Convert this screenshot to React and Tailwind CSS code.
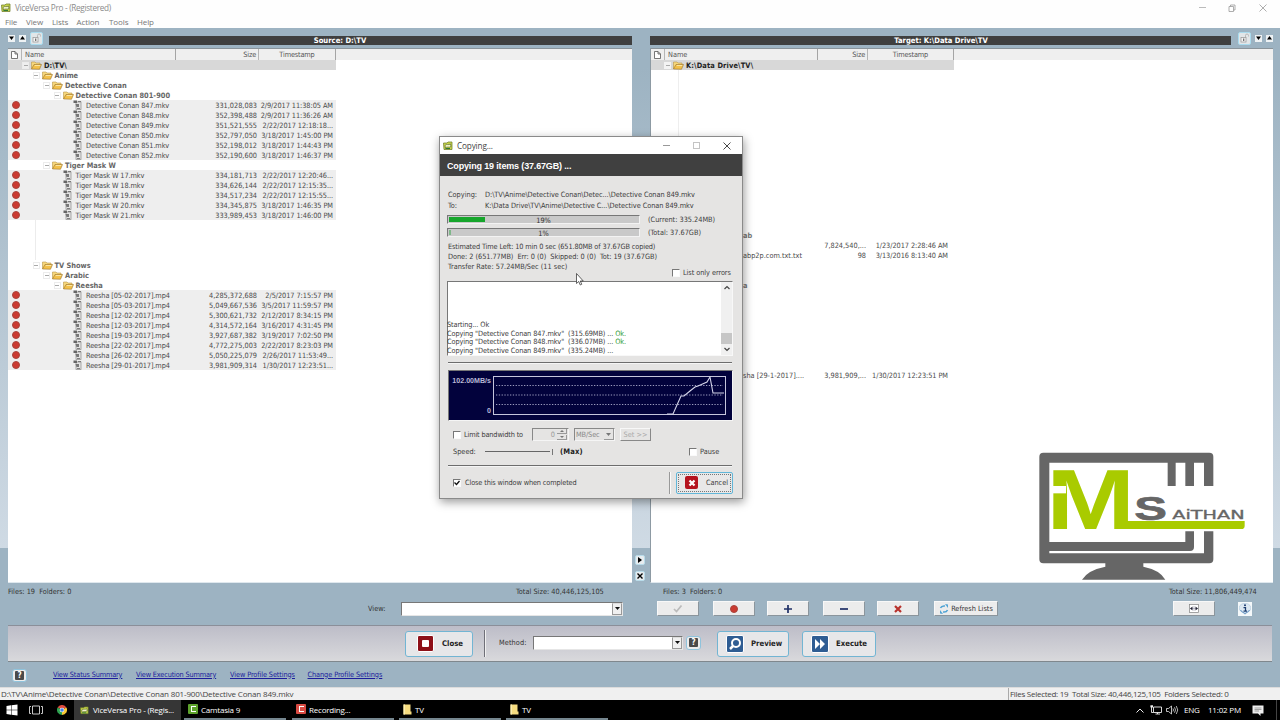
const sourceRows = [
  { level: 0, name: "D:\\TV\\", root: true },
  { level: 1, name: "Anime" },
  { level: 2, name: "Detective Conan" },
  { level: 3, name: "Detective Conan 801-900" },
  { level: 4, name: "Detective Conan 847.mkv", size: "331,028,083", time: "2/9/2017 11:38:05 AM" },
  { level: 4, name: "Detective Conan 848.mkv", size: "352,398,488", time: "2/9/2017 11:36:26 AM" },
  { level: 4, name: "Detective Conan 849.mkv", size: "351,521,555", time: "2/22/2017 12:18:18..." },
  { level: 4, name: "Detective Conan 850.mkv", size: "352,797,050", time: "3/18/2017 1:45:00 PM" },
  { level: 4, name: "Detective Conan 851.mkv", size: "352,198,012", time: "3/18/2017 1:44:43 PM" },
  { level: 4, name: "Detective Conan 852.mkv", size: "352,190,600", time: "3/18/2017 1:46:37 PM" },
  { level: 2, name: "Tiger Mask W" },
  { level: 3, name: "Tiger Mask W 17.mkv", size: "334,181,713", time: "2/22/2017 12:20:46..." },
  { level: 3, name: "Tiger Mask W 18.mkv", size: "334,626,144", time: "2/22/2017 12:15:35..." },
  { level: 3, name: "Tiger Mask W 19.mkv", size: "334,517,234", time: "2/22/2017 12:15:55..." },
  { level: 3, name: "Tiger Mask W 20.mkv", size: "334,345,875", time: "3/18/2017 1:46:35 PM" },
  { level: 3, name: "Tiger Mask W 21.mkv", size: "333,989,453", time: "3/18/2017 1:46:00 PM" },
  null,
  null,
  null,
  null,
  { level: 1, name: "TV Shows" },
  { level: 2, name: "Arabic" },
  { level: 3, name: "Reesha" },
  { level: 4, name: "Reesha [05-02-2017].mp4", size: "4,285,372,688", time: "2/5/2017 7:15:57 PM" },
  { level: 4, name: "Reesha [05-03-2017].mp4", size: "5,049,667,536", time: "3/5/2017 11:59:57 PM" },
  { level: 4, name: "Reesha [12-02-2017].mp4", size: "5,300,621,732", time: "2/12/2017 8:34:15 PM" },
  { level: 4, name: "Reesha [12-03-2017].mp4", size: "4,314,572,164", time: "3/16/2017 4:31:45 PM" },
  { level: 4, name: "Reesha [19-03-2017].mp4", size: "3,927,687,382", time: "3/19/2017 7:02:50 PM" },
  { level: 4, name: "Reesha [22-02-2017].mp4", size: "4,772,275,003", time: "2/22/2017 8:23:03 PM" },
  { level: 4, name: "Reesha [26-02-2017].mp4", size: "5,050,225,079", time: "2/26/2017 11:53:49..." },
  { level: 4, name: "Reesha [29-01-2017].mp4", size: "3,981,909,314", time: "1/30/2017 12:23:51..." },
];

// skip is the number of empty rows in front of the entry
const targetRows = [
  { skip: 16, name: "ab", bold: true },
  { skip: 0, name: "", size: "7,824,540,...", time: "1/23/2017 2:28:46 AM" },
  { skip: 0, name: "abp2p.com.txt.txt", size: "98", time: "3/13/2016 8:13:40 AM" },
  { skip: 2, name: "a", bold: true },
  { skip: 8, name: "sha [29-1-2017]....", size: "3,981,909,...", time: "1/30/2017 12:23:51 PM" },
];

const indents = ["w-[14px]", "w-[24.5px]", "w-[35px]", "w-[45.5px]", "w-[56px]"];

function AppIcon({ className = "w-[10px] h-[10px]" }) {
  return (
    <svg className={className} viewBox="0 0 20 20">
      <path d="M1 4h7l2-2h8v15H2z" fill="#c9d64a" stroke="#6f7d2a" strokeWidth="1.5" />
      <path d="M4 9c3-4 7 0 11-3l1 5c-4 3-8-1-11 3z" fill="#f4f6cf" stroke="#47551c" strokeWidth="1.2" />
      <path d="M5 15h9" stroke="#2f7a35" strokeWidth="2" />
    </svg>
  );
}

function FolderIcon() {
  return (
    <svg className="w-[11px] h-[9px] shrink-0" viewBox="0 0 22 18">
      <path d="M1 16V2h7l2 2h8v4" fill="#f6d77c" stroke="#b8954a" strokeWidth="1.2" />
      <path d="M1 16L6 7h15l-4 9.5z" fill="#f3c04a" stroke="#9a7630" strokeWidth="1.2" />
      <path d="M7.5 9h11" stroke="#fde9a8" strokeWidth="1.8" />
    </svg>
  );
}

function FileIcon() {
  return (
    <svg className="w-[9px] h-[10px] shrink-0" viewBox="0 0 18 20">
      <rect x="6" y="4" width="10" height="15" fill="#e2e2e2" stroke="#8a8a8a" strokeWidth="1.4" />
      <rect x="1" y="1" width="7" height="5" fill="#666" />
      <path d="M5 8h7v6H7z" fill="#777" />
      <path d="M10 3h6M8 17h6" stroke="#666" strokeWidth="1.6" />
    </svg>
  );
}

function DocIcon() {
  return (
    <svg className="w-[7px] h-[8px] shrink-0" viewBox="0 0 14 16">
      <path d="M1 1h7l5 5v9H1zM8 1v5h5" fill="#fff" stroke="#555" strokeWidth="1.6" />
    </svg>
  );
}

function HelpIcon({ className }) {
  return (
    <div className={`flex items-center justify-center rounded-[3px] border border-[#8fc3dc] bg-[#ececec] ${className}`}>
      <span className="flex h-[9px] w-[9px] items-center justify-center rounded-[1px] bg-[#4a4a4a] text-[8px] font-bold leading-none text-white">
        ?
      </span>
    </div>
  );
}

function ArrowBox({ up }) {
  return (
    <div className="flex h-[7px] w-[7px] items-center justify-center bg-[#eef2f4]">
      <svg className="h-[4px] w-[5px]" viewBox="0 0 10 8">
        <path d={up ? "M5 0l5 7H0z" : "M0 1h10L5 8z"} fill="#000" />
      </svg>
    </div>
  );
}

function LockBox() {
  return (
    <div className="flex h-[13px] w-[13px] items-center justify-center rounded-[2px] border border-[#a9dbee] bg-[#e2e6e8]">
      <svg className="h-[10px] w-[10px]" viewBox="0 0 20 20">
        <rect x="2" y="9" width="10" height="9" fill="#f6f6f6" stroke="#999" strokeWidth="1.5" />
        <path d="M11 9V5q0-3 3-3t3 3v2" fill="none" stroke="#aaa" strokeWidth="1.5" />
        <path d="M7.500 11v5" stroke="#444" strokeWidth="2" />
      </svg>
    </div>
  );
}

function ListHeader({ nameWidth, sizeWidth, timeWidth }) {
  return (
    <div className="flex h-[12px] shrink-0 items-stretch border-t border-[#8b949a] bg-[#efefef] text-[7.3px] leading-[12px] text-[#555]">
      <div className="flex w-[14px] items-center border-r border-[#b5b5b5] pl-[3px]">
        <DocIcon />
      </div>
      <div className={`border-r border-[#a5a5a5] pl-[3px] ${nameWidth}`}>Name</div>
      <div className={`border-r border-[#b5b5b5] pr-[2px] text-right tracking-[-0.2px] ${sizeWidth}`}>Size</div>
      <div className={`border-r border-[#a5a5a5] text-center tracking-[-0.15px] ${timeWidth}`}>Timestamp</div>
    </div>
  );
}

function TreeRow({ row }) {
  if (!row) {
    return (
      <div className="flex h-[10px]">
        <div className="w-[28px] border-r border-[#ececec]" />
      </div>
    );
  }
  const isFile = Boolean(row.size);
  const bg = row.root ? "bg-[#d8d8d8]" : isFile ? "bg-[#eeeeee]" : "";
  return (
    <div className={`flex h-[10px] w-[328px] items-center whitespace-nowrap leading-[11px] ${bg}`}>
      <div className="flex w-[168px] items-center">
        <div className="w-0">
          {isFile && <div className="ml-[4px] h-[8px] w-[8px] rounded-full border border-[#a8443c] bg-[#cb3a31]" />}
        </div>
        <div className={`shrink-0 ${indents[row.level]}`} />
        <div className="flex w-[9px] shrink-0 justify-start">
          {!isFile && (
            <div className="flex h-[7px] w-[7px] items-center justify-center border border-[#ececec] bg-white/60">
              <div className="h-px w-[4px] bg-[#aaa]" />
            </div>
          )}
        </div>
        <div className="flex w-[13px] shrink-0 items-center">{isFile ? <FileIcon /> : <FolderIcon />}</div>
        {isFile ? (
          <span className="text-[7.3px] tracking-[-0.1px] text-[#4a4a4a]">{row.name}</span>
        ) : (
          <span className={`text-[7.4px] font-bold ${row.root ? "text-[#222]" : "text-[#666]"}`}>{row.name}</span>
        )}
      </div>
      <div className="w-[81px] text-right text-[7.3px] text-[#4a4a4a]">{row.size}</div>
      <div className="w-[79px] pr-[3px] text-right text-[7.3px] tracking-[-0.05px] text-[#4a4a4a]">{row.time}</div>
    </div>
  );
}

function SourcePanel() {
  return (
    <div className="flex w-[624px] flex-col">
      <div className="flex h-[20px] items-center">
        <div className="flex w-[41px] items-center gap-[4px]">
          <ArrowBox />
          <ArrowBox up />
          <LockBox />
        </div>
        <div className="mt-[5px] h-[9px] flex-1 bg-[#3f3f3f] text-center text-[7.6px] font-bold leading-[9px] text-white">
          <span className="-ml-[1px]">Source: D:\TV</span>
        </div>
      </div>
      <div className="flex flex-1 flex-col border-b border-[#dfe8ee] bg-white">
        <ListHeader nameWidth="w-[154px]" sizeWidth="w-[83px]" timeWidth="w-[77px]" />
        {sourceRows.map((row, i) => (
          <TreeRow key={i} row={row} />
        ))}
      </div>
    </div>
  );
}

function TargetPanel() {
  return (
    <div className="flex w-[623px] flex-col">
      <div className="flex h-[20px] items-center">
        <div className="mt-[5px] h-[9px] w-[581px] bg-[#3f3f3f] text-center text-[7.6px] font-bold leading-[9px] text-white">
          <span className="ml-[1px]">Target: K:\Data Drive\TV</span>
        </div>
        <div className="ml-[7px] flex items-center gap-[4px]">
          <LockBox />
          <ArrowBox />
          <ArrowBox up />
        </div>
      </div>
      <div className="flex flex-1 flex-col border-b border-l border-b-[#dfe8ee] border-l-[#8d9aa3] bg-white">
        <ListHeader nameWidth="w-[153px]" sizeWidth="w-[50px]" timeWidth="w-[86px]" />
        <div className="flex h-[10px] w-[303px] items-center bg-[#d8d8d8] leading-[11px]">
          <div className="ml-[13px] flex h-[7px] w-[7px] items-center justify-center bg-white/70">
            <div className="h-px w-[4px] bg-[#aaa]" />
          </div>
          <div className="ml-[2px] flex w-[13px] items-center">
            <FolderIcon />
          </div>
          <span className="text-[7.4px] font-bold tracking-[0.15px] text-[#222]">K:\Data Drive\TV\</span>
        </div>
        <div className="flex flex-1">
          <div className="h-[72px] w-[28px] border-r border-[#eeeeee]" />
          <div className="flex flex-1 flex-col">
            {targetRows.map((row, i) => (
              <div key={i} style={{ marginTop: row.skip * 10 }} className="flex h-[10px] items-center whitespace-nowrap text-[7.3px] leading-[11px] text-[#4a4a4a]">
                <div className={`w-[72px] pl-[64px] ${row.bold ? "font-bold text-[#777]" : ""}`}>{row.name}</div>
                <div className="w-[115px] text-right">{row.size}</div>
                <div className="w-[82px] text-right tracking-[-0.05px]">{row.time}</div>
              </div>
            ))}
          </div>
        </div>
      </div>
    </div>
  );
}

function Checkbox({ checked }) {
  return (
    <div className="flex h-[8px] w-[8px] shrink-0 items-center justify-center border border-[#fafafa] border-l-[#777] border-t-[#777] bg-white">
      {checked && (
        <svg className="h-[6px] w-[6px]" viewBox="0 0 12 12">
          <path d="M1 5l4 4 6-7" fill="none" stroke="#111" strokeWidth="2.6" />
        </svg>
      )}
    </div>
  );
}

function Progress({ label, bar }) {
  return (
    <div className="relative h-[9px] w-[193px] border border-[#f3f3f3] border-l-[#777] border-t-[#777] bg-[#c9c9c9] p-px">
      <div className={`h-full ${bar}`} />
      <span className="absolute inset-0 text-center text-[7.3px] leading-[9px] text-[#333]">{label}</span>
    </div>
  );
}

function CopyDialog() {
  return (
    <div className="absolute left-[439px] top-[136px] flex h-[363px] w-[304px] flex-col whitespace-nowrap border border-[#8a8a8a] bg-[#e5e4e3] text-[7.3px] leading-[10px] text-[#3c3c3c] shadow-[1px_3px_9px_rgba(0,0,0,0.4)]">
      <div className="flex h-[17px] shrink-0 items-center bg-white pl-[3px] pr-[11px]">
        <AppIcon />
        <span className="ml-[4px] flex-1 font-['Open_Sans',sans-serif] text-[8.2px] tracking-[-0.15px] text-[#444]">Copying...</span>
        <div className="h-px w-[7px] bg-[#999]" />
        <div className="ml-[23px] h-[7px] w-[7px] border border-[#c4c4c4]" />
        <svg className="ml-[23px] h-[8px] w-[8px]" viewBox="0 0 16 16">
          <path d="M1 1l14 14M15 1L1 15" stroke="#333" strokeWidth="1.8" />
        </svg>
      </div>
      <div className="flex h-[22px] shrink-0 items-center bg-[#404040] pl-[7px] pt-px font-['Liberation_Sans',sans-serif] text-[9px] font-bold tracking-[-0.16px] text-white">
        Copying 19 items (37.67GB) ...
      </div>

      <div className="mt-[14px] flex flex-col pl-[8px]">
        <div className="flex">
          <span className="w-[37px]">Copying:</span>
          <span className="tracking-[-0.06px]">D:\TV\Anime\Detective Conan\Detec...\Detective Conan 849.mkv</span>
        </div>
        <div className="flex h-[11px] items-end">
          <span className="w-[37px]">To:</span>
          <span className="tracking-[-0.06px]">K:\Data Drive\TV\Anime\Detective C...\Detective Conan 849.mkv</span>
        </div>
      </div>
      <div className="mt-[4px] flex h-[9px] items-center pl-[7px]">
        <Progress label="19%" bar="w-[36px] bg-[#17a62c]" />
        <span className="ml-[8px]">(Current: 335.24MB)</span>
      </div>
      <div className="mt-[4px] flex h-[9px] items-center pl-[7px]">
        <Progress label="1%" bar="w-[2px] bg-[#7fb789]" />
        <span className="ml-[8px]">(Total: 37.67GB)</span>
      </div>
      <div className="mt-[5px] flex flex-col pl-[8px]">
        <span className="h-[9.5px] tracking-[-0.13px]">Estimated Time Left: 10 min 0 sec (651.80MB of 37.67GB copied)</span>
        <span className="h-[10px] tracking-[-0.04px]">Done: 2 (651.77MB)&nbsp; Err: 0 (0)&nbsp; Skipped: 0 (0)&nbsp; Tot: 19 (37.67GB)</span>
        <span className="h-[6px]">Transfer Rate: 57.24MB/Sec (11 sec)</span>
      </div>
      <div className="flex items-center gap-[3px] pl-[232px]">
        <Checkbox />
        <span className="tracking-[-0.06px]">List only errors</span>
      </div>

      <div className="ml-[7px] mt-[3px] flex h-[75px] w-[286px] border border-[#f8f8f8] border-l-[#777] border-t-[#777] bg-white">
        <div className="-mb-px -ml-px flex flex-1 flex-col justify-end leading-[8.6px] tracking-[-0.1px]">
          <span>Starting... Ok</span>
          <span>Copying "Detective Conan 847.mkv"&nbsp; (315.69MB) ... <span className="text-[#2f9a35]">Ok.</span></span>
          <span>Copying "Detective Conan 848.mkv"&nbsp; (336.07MB) ... <span className="text-[#2f9a35]">Ok.</span></span>
          <span>Copying "Detective Conan 849.mkv"&nbsp; (335.24MB) ...</span>
        </div>
        <div className="flex w-[11px] flex-col items-center justify-between bg-[#f0f0f0] py-[3px]">
          <svg className="h-[5px] w-[6px]" viewBox="0 0 12 10">
            <path d="M1 8l5-5 5 5" fill="none" stroke="#444" strokeWidth="2.4" />
          </svg>
          <div className="mt-[40px] h-[11px] w-full bg-[#c6c6c6]" />
          <svg className="h-[5px] w-[6px]" viewBox="0 0 12 10">
            <path d="M1 2l5 5 5-5" fill="none" stroke="#444" strokeWidth="2.4" />
          </svg>
        </div>
      </div>

      <div className="ml-[8px] mt-[6px] h-[2px] w-[284px] border-b border-t border-b-[#f5f5f5] border-t-[#6d6d6d]" />

      <div className="ml-[8px] mt-[6px] flex h-[51px] w-[285px] border border-[#f5f5f5] border-l-[#777] border-t-[#777] bg-[#02023c]">
        <div className="flex w-[42px] flex-col justify-between pb-[4px] pt-[5px] text-right font-['Liberation_Sans',sans-serif] text-[7.1px] font-bold text-[#b9b9d6]">
          <span>102.00MB/s</span>
          <span>0</span>
        </div>
        <svg className="ml-[2px] mt-[5px] h-[40px] w-[235px]" viewBox="0 0 235 40">
          <rect x="0.5" y="0.5" width="232" height="38" fill="none" stroke="#c5c5dc" />
          <path d="M3 9.5h227M3 19h227M3 28.5h227" stroke="#9c9cbe" strokeDasharray="1.3 1.5" />
          <path
            d="M174 38h6l8-18h3l6-5 5-4 3-1 9-4 3-5 3 16h11"
            fill="none"
            stroke="#d5d5ea"
            strokeWidth="1.1"
          />
        </svg>
      </div>

      <div className="mt-[7px] flex h-[14px] items-center pl-[13px]">
        <Checkbox />
        <span className="ml-[3px] w-[67px] pt-px tracking-[-0.15px]">Limit bandwidth to</span>
        <div className="ml-[1px] flex h-[13px] w-[37px] items-center justify-end border border-[#f5f5f5] border-l-[#888] border-t-[#888] pr-px text-[#999]">
          <span className="pt-px">0</span>
          <div className="ml-[2px] flex h-full w-[10px] flex-col gap-px">
            <div className="flex flex-1 items-center justify-center border-b border-r border-[#999]">
              <svg className="h-[2px] w-[4px]" viewBox="0 0 4 2"><path d="M2 0l2 2H0z" fill="#777" /></svg>
            </div>
            <div className="flex flex-1 items-center justify-center border-b border-r border-[#999]">
              <svg className="h-[2px] w-[4px]" viewBox="0 0 4 2"><path d="M0 0h4L2 2z" fill="#777" /></svg>
            </div>
          </div>
        </div>
        <div className="ml-[5px] flex h-[13px] w-[41px] items-center justify-between border border-[#f5f5f5] border-l-[#888] border-t-[#888] pl-px text-[#888]">
          <span className="pt-px tracking-[-0.1px]">MB/Sec</span>
          <div className="flex h-full w-[10px] items-center justify-center border-b border-r border-[#999]">
            <svg className="h-[3px] w-[5px]" viewBox="0 0 10 6"><path d="M0 0h10L5 6z" fill="#777" /></svg>
          </div>
        </div>
        <div className="ml-[5px] flex h-[13px] w-[31px] items-center justify-center border border-[#888] border-l-[#f8f8f8] border-t-[#f8f8f8] pt-px text-[#aaa]">
          Set &gt;&gt;
        </div>
      </div>
      <div className="mt-[5px] flex h-[10px] items-center pl-[13px]">
        <span className="w-[32px]">Speed:</span>
        <div className="h-[6px] w-[68px] border-r border-[#777]">
          <div className="mt-[2px] h-px w-[65px] bg-[#666]" />
        </div>
        <span className="ml-[7px] w-[125px] text-[7.6px] font-bold tracking-[0.15px] text-[#222]">(Max)</span>
        <div className="ml-[4px] flex items-center gap-[3px]">
          <Checkbox />
          <span className="pt-px">Pause</span>
        </div>
      </div>
      <div className="ml-[8px] mt-[8px] h-[2px] w-[284px] border-b border-t border-b-[#f5f5f5] border-t-[#6d6d6d]" />
      <div className="mt-[5px] flex h-[22px] items-center pl-[13px]">
        <Checkbox checked />
        <span className="ml-[4px] w-[204px] tracking-[-0.13px]">Close this window when completed</span>
        <div className="h-[22px] w-[2px] border-l border-r border-l-[#999] border-r-[#fafafa]" />
        <div className="ml-[5px] flex h-[22px] w-[57px] items-center rounded-[2px] border border-[#62b6d8] bg-[#e9e8e8] p-px">
          <div className="flex h-full w-full items-center border border-dotted border-[#777] pl-[6px]">
            <div className="flex h-[13px] w-[13px] items-center justify-center rounded-[2px] bg-[#b5141f]">
              <svg className="h-[8px] w-[8px]" viewBox="0 0 16 16">
                <path d="M3 3l10 10M13 3L3 13" stroke="#fff" strokeWidth="4.5" />
              </svg>
            </div>
            <span className="ml-[8px] tracking-[-0.05px]">Cancel</span>
          </div>
        </div>
      </div>
    </div>
  );
}

// Watermark logo in the lower right corner of the target list
function Logo() {
  return (
    <svg className="absolute left-[1020px] top-[440px] h-[150px] w-[260px]" viewBox="0 0 780 450">
      <g fill="#666666">
        <path d="M70 38H568q12 0 12 12V138H552V68H522V138H496V68H467V138H443V68H88V306H496V274H522V321q0 12-12 12H88V340H552V274H580V358q0 12-12 12H370V380Q420 390 436 419H186Q204 390 256 380V370H70q-12 0-12-12V50q0-12 12-12z" />
      </g>
      <g fontFamily="'Liberation Sans', sans-serif" fontWeight="bold">
        <text transform="translate(79 267) scale(1.26 1)" fontSize="254" fill="#a9cb00">M</text>
        <rect x="96" y="138" width="42" height="22" fill="#fff" />
        <path d="M293 243H674V257q0 10-10 10H293z" fill="#a9cb00" />
        <text transform="translate(343 239) scale(1.5 1)" fontSize="98" fill="#666666" stroke="#666666" strokeWidth="2">S</text>
      </g>
      <text
        x="457"
        y="237"
        fontFamily="'DejaVu Sans', sans-serif"
        fontSize="37"
        textLength="217"
        lengthAdjust="spacingAndGlyphs"
        fill="#666666"
        stroke="#666666"
        strokeWidth="1"
      >
        AiTHAN
      </text>
    </svg>
  );
}

function ToolButton({ children, className = "w-[41px]" }) {
  return (
    <div className={`flex h-[15px] shrink-0 items-center justify-center border border-[#8b959c] border-l-[#f8f8f8] border-t-[#f8f8f8] bg-[#ececec] ${className}`}>
      {children}
    </div>
  );
}

function Combo({ className }) {
  return (
    <div className={`flex h-[14px] justify-end border border-[#e6e6e6] border-l-[#777] border-t-[#777] bg-white ${className}`}>
      <div className="flex w-[10px] items-center justify-center border border-[#999] border-t-[#ddd] bg-[#f0f0f0]">
        <svg className="h-[3px] w-[5px]" viewBox="0 0 10 6">
          <path d="M0 0h10L5 6z" fill="#111" />
        </svg>
      </div>
    </div>
  );
}

function BigButton({ children, label, className }) {
  return (
    <div className={`flex h-[26px] shrink-0 items-center rounded-[3px] border border-[#72b5d3] bg-[#e7e7e9] text-[7.7px] font-bold text-[#222] ${className}`}>
      {children}
      <span>{label}</span>
    </div>
  );
}

function BottomArea() {
  return (
    <div className="flex h-[104px] flex-col text-[7.3px] leading-[10px] text-[#333]">
      <div className="mt-[4px] flex h-[9px] whitespace-nowrap pl-[8px]">
        <span className="w-[508px]">Files: 19&nbsp; Folders: 0</span>
        <span className="w-[147px] tracking-[0.02px]">Total Size: 40,446,125,105</span>
        <span className="w-[506px]">Files: 3&nbsp; Folders: 0</span>
        <span className="tracking-[0.02px]">Total Size: 11,806,449,474</span>
      </div>
      <div className="mt-[5px] flex h-[15px] items-center">
        <span className="ml-[368px] w-[33px]">View:</span>
        <Combo className="w-[222px]" />
        <ToolButton className="ml-[34px] w-[42px]">
          <svg className="h-[9px] w-[10px]" viewBox="0 0 20 18">
            <path d="M2 10l5 5L17 3" fill="none" stroke="#bbb" strokeWidth="3.5" />
          </svg>
        </ToolButton>
        <ToolButton className="ml-[14px] w-[42px]">
          <div className="h-[8px] w-[8px] rounded-full border border-[#a8443c] bg-[#cb3a31]" />
        </ToolButton>
        <ToolButton className="ml-[12px] w-[42px]">
          <svg className="h-[8px] w-[8px]" viewBox="0 0 8 8"><path d="M4 0v8M0 4h8" stroke="#1f2f66" strokeWidth="1.7" /></svg>
        </ToolButton>
        <ToolButton className="ml-[14px] w-[42px]">
          <svg className="h-[8px] w-[8px]" viewBox="0 0 8 8"><path d="M0 4h8" stroke="#1f2f66" strokeWidth="1.7" /></svg>
        </ToolButton>
        <ToolButton className="ml-[12px] w-[42px]">
          <svg className="h-[8px] w-[8px]" viewBox="0 0 8 8"><path d="M1 1l6 6M7 1L1 7" stroke="#b8322c" strokeWidth="2.2" /></svg>
        </ToolButton>
        <ToolButton className="ml-[15px] w-[64px]">
          <svg className="h-[10px] w-[10px]" viewBox="0 0 20 20">
            <path d="M3 8q2-5 9-4M17 12q-2 5-9 4" fill="none" stroke="#4fa3d4" strokeWidth="3" />
            <path d="M12 0l6 1v7zM8 20l-6-1v-7z" fill="#4fa3d4" />
          </svg>
          <span className="ml-[2px] whitespace-nowrap pt-px text-[#333]">Refresh Lists</span>
        </ToolButton>
        <ToolButton className="ml-[175px] w-[42px]">
          <svg className="h-[9px] w-[10px]" viewBox="0 0 20 18">
            <rect x="1" y="1" width="18" height="16" fill="#fff" stroke="#888" strokeWidth="1.5" />
            <path d="M3 9h14M10 4v10" stroke="#aab" strokeWidth="1.5" />
            <path d="M2 9l5-4v8zM18 9l-5-4v8z" fill="#223" />
          </svg>
        </ToolButton>
        <div className="ml-[23px] flex h-[14px] w-[14px] items-center justify-center bg-[#f4f8fa]">
          <svg className="h-[12px] w-[12px]" viewBox="0 0 24 24">
            <path d="M12 1a10 9 0 0 1 3 18l-3 4-3-4A10 9 0 0 1 12 1z" fill="#dce8f2" stroke="#a4c0d8" />
            <path d="M3 14q3 5 9 7 6-2 9-7" fill="none" stroke="#5f8fc0" strokeWidth="2" />
            <circle cx="12" cy="4.500" r="2" fill="#1d3d70" />
            <path d="M9 9h4v7M9 16h7" fill="none" stroke="#1d3d70" strokeWidth="2.5" />
          </svg>
        </div>
      </div>

      <div className="mx-[8px] mt-[9px] flex h-[37px] items-center border-b border-t border-b-[#7f878d] border-t-[#8b8f99] bg-gradient-to-b from-[#bdbdc8] to-[#d9d9dc]">
        <BigButton label="Close" className="ml-[397px] w-[68px] gap-[8px] pl-[11px]">
          <div className="flex h-[17px] w-[17px] items-center justify-center rounded-[2px] border border-white bg-[#8e1018]">
            <div className="h-[7px] w-[7px] rounded-[1px] bg-white" />
          </div>
        </BigButton>
        <div className="ml-[11px] h-[27px] w-[2px] border-l border-r border-l-[#6f6f78] border-r-[#f0f0f0]" />
        <span className="ml-[13px] w-[34px] pb-[2px] tracking-[0.1px]">Method:</span>
        <Combo className="mb-[2px] w-[150px]" />
        <HelpIcon className="mb-[2px] ml-[3px] h-[14px] w-[15px]" />
        <BigButton label="Preview" className="ml-[16px] w-[72px] gap-[7px] pl-[8px]">
          <div className="flex h-[18px] w-[18px] items-center justify-center rounded-[2px] border border-white bg-[#2f5d93]">
            <svg className="h-[14px] w-[14px]" viewBox="0 0 28 28">
              <circle cx="16" cy="12" r="8" fill="none" stroke="#fff" strokeWidth="4" />
              <path d="M10 18l-6 6" stroke="#fff" strokeWidth="5" />
            </svg>
          </div>
        </BigButton>
        <BigButton label="Execute" className="ml-[13px] w-[74px] gap-[7px] pl-[8px]">
          <div className="flex h-[18px] w-[18px] items-center justify-center rounded-[2px] border border-white bg-[#2f5d93]">
            <svg className="h-[14px] w-[14px]" viewBox="0 0 28 28">
              <path d="M4 4l10 10L4 24zM14 4l10 10-10 10z" fill="#fff" />
            </svg>
          </div>
        </BigButton>
      </div>

      <div className="flex h-[25px] items-center whitespace-nowrap pl-[12px] text-[#1c1c9c]">
        <HelpIcon className="mt-[2px] h-[13px] w-[15px]" />
        <div className="ml-[26px] w-[83px] tracking-[-0.16px] underline">View Status Summary</div>
        <div className="w-[94px] tracking-[-0.16px] underline">View Execution Summary</div>
        <div className="w-[77.5px] tracking-[-0.1px] underline">View Profile Settings</div>
        <div className="tracking-[-0.08px] underline">Change Profile Settings</div>
      </div>
    </div>
  );
}

function StatusBar() {
  return (
    <div className="flex h-[13px] items-center whitespace-nowrap border-t border-[#dcdcdc] bg-[#f0f0f0] font-['Open_Sans',sans-serif] text-[8px] leading-[12px] text-[#444]">
      <span className="w-[1008px] pl-[1px] tracking-[-0.16px]">D:\TV\Anime\Detective Conan\Detective Conan 801-900\Detective Conan 849.mkv</span>
      <span className="border-l border-[#aaa] pl-[1px] tracking-[-0.28px]">Files Selected: 19&nbsp; Total Size: 40,446,125,105&nbsp; Folders Selected: 0</span>
    </div>
  );
}

function CamtasiaIcon({ color }) {
  return (
    <div className={`flex h-[10px] w-[10px] items-center justify-center rounded-[1px] ${color}`}>
      <div className="h-[6px] w-[5px] border-[1.5px] border-r-0 border-white" />
    </div>
  );
}

function NoteIcon() {
  return (
    <svg className="h-[11px] w-[9px]" viewBox="0 0 18 22">
      <path d="M1 1h14v14h2v6H1z" fill="#f6dc80" />
      <path d="M1 1h3v20H1z" fill="#fbeeb0" />
    </svg>
  );
}

function Taskbar() {
  const item = "flex h-[20px] items-center whitespace-nowrap border-b-2 pl-[4px] border-[#75868f]";
  return (
    <div className="flex h-[20px] items-center bg-black font-['Open_Sans',sans-serif] text-[8px] leading-[18px] tracking-[-0.2px] text-white">
      <svg className="ml-[6px] h-[12px] w-[12px]" viewBox="0 0 24 24">
        <path d="M1 4l9-1.5v9H1zM11 2.3L23 1v10.5H11zM1 12.5h9v9L1 20zM11 12.5h12V23l-12-1.5z" fill="#fff" />
      </svg>
      <svg className="ml-[11px] h-[10px] w-[14px]" viewBox="0 0 28 20">
        <path d="M7 2h14v16H7zM4 3H1v14h3M24 3h3v14h-3" fill="none" stroke="#ddd" strokeWidth="1.8" />
      </svg>
      <svg className="ml-[14px] h-[10px] w-[10px]" viewBox="0 0 20 20">
        <path d="M10 10L1.3 5A10 10 0 0 1 18.7 5z" fill="#dd4b3e" />
        <path d="M10 10L18.7 5A10 10 0 0 1 10 20z" fill="#f9c937" />
        <path d="M10 10V20A10 10 0 0 1 1.3 5z" fill="#2fa352" />
        <circle cx="10" cy="10" r="4.6" fill="#fff" />
        <circle cx="10" cy="10" r="3.6" fill="#4285e8" />
      </svg>
      <div className="ml-[7px] flex h-[20px] w-[107px] items-center whitespace-nowrap bg-[#363636] pl-[6px]">
        <AppIcon className="h-[9px] w-[9px]" />
        <span className="ml-[4px]">ViceVersa Pro - (Regis...</span>
      </div>
      <div className={`ml-[3px] w-[102px] ${item}`}>
        <CamtasiaIcon color="bg-[#5da22c]" />
        <span className="ml-[3px] pt-[2px]">Camtasia 9</span>
      </div>
      <div className={`ml-[6px] w-[102px] ${item}`}>
        <CamtasiaIcon color="bg-[#d84a42]" />
        <span className="ml-[3px] pt-[2px]">Recording...</span>
      </div>
      <div className={`ml-[5px] w-[102px] ${item}`}>
        <NoteIcon />
        <span className="ml-[3px] pt-[2px]">TV</span>
      </div>
      <div className={`ml-[5px] w-[102px] ${item}`}>
        <NoteIcon />
        <span className="ml-[3px] pt-[2px]">TV</span>
      </div>
      <div className="ml-auto flex items-center">
        <svg className="h-[5px] w-[8px]" viewBox="0 0 16 10">
          <path d="M1 9l7-7 7 7" fill="none" stroke="#eee" strokeWidth="2" />
        </svg>
        <svg className="ml-[6px] h-[10px] w-[12px]" viewBox="0 0 24 20">
          <path d="M7 4h16v11H7zM11 18h9M15 15v3M1 2h5M3 2v13h4" fill="none" stroke="#eee" strokeWidth="1.8" />
          <rect x="1" y="1" width="5" height="4" fill="#eee" />
        </svg>
        <svg className="ml-[4px] h-[10px] w-[13px]" viewBox="0 0 26 20">
          <path d="M1 7h4l6-5v16l-6-5H1z" fill="none" stroke="#eee" strokeWidth="1.6" />
          <path d="M14 7q2 3 0 6M17 4.5q4 5.5 0 11M20.5 2q6 8 0 16" fill="none" stroke="#ddd" strokeWidth="1.6" />
        </svg>
        <span className="ml-[5px] w-[24px]">ENG</span>
        <span className="w-[44px] whitespace-nowrap">11:02 PM</span>
        <svg className="h-[11px] w-[12px]" viewBox="0 0 24 22">
          <path d="M1 1h22v16H17v5l-5-5H1z" fill="#eee" />
          <path d="M5 6h14M5 9h14M5 12h9" stroke="#777" strokeWidth="1.3" />
        </svg>
        <div className="ml-[12px] mr-[3px] h-[20px] w-px bg-[#444]" />
      </div>
    </div>
  );
}

export default function App() {
  return (
    <div className="relative flex h-[720px] w-[1280px] flex-col overflow-hidden bg-[#9db3c2] font-['DejaVu_Sans_Condensed','DejaVu_Sans',sans-serif]">
      <div className="flex h-[28px] shrink-0 flex-col bg-[#fefefe] font-['Open_Sans',sans-serif] text-[#8b8b8b]">
        <div className="flex h-[15px] items-center pl-[1px] pr-[13px]">
          <AppIcon />
          <span className="ml-[4px] flex-1 text-[8.2px] leading-[15px] tracking-[-0.3px]">ViceVersa Pro - (Registered)</span>
          <div className="h-px w-[7px] bg-[#bbb]" />
          <svg className="ml-[22px] h-[8px] w-[8px]" viewBox="0 0 16 16">
            <path d="M2 5h9v10H2zM5 5V2h9v10h-3" fill="none" stroke="#999" strokeWidth="1.6" />
          </svg>
          <svg className="ml-[23px] h-[8px] w-[8px]" viewBox="0 0 16 16">
            <path d="M1 1l14 14M15 1L1 15" stroke="#999" strokeWidth="1.6" />
          </svg>
        </div>
        <div className="flex h-[13px] items-center pl-[5px] text-[8px] leading-[13px] tracking-[-0.1px] text-[#777]">
          <span className="w-[21px]">File</span>
          <span className="w-[26px]">View</span>
          <span className="w-[24.5px]">Lists</span>
          <span className="w-[32.5px]">Action</span>
          <span className="w-[28px]">Tools</span>
          <span>Help</span>
        </div>
      </div>

      <div className="flex h-[555px] shrink-0 bg-[linear-gradient(#9db3c2_0,#9db3c2_40px,#cfdae4_520px,#9db3c2_520px)] pl-[8px]">
        <SourcePanel />
        <div className="flex w-[18px] flex-col items-center justify-end gap-[6px] pb-[2px] pr-[2px]">
          <div className="flex h-[10px] w-[10px] items-center justify-center rounded-[2px] border border-[#b9dcea] bg-[#e8edf0]">
            <svg className="h-[6px] w-[4px]" viewBox="0 0 4 6"><path d="M0 0l4 3-4 3z" fill="#000" /></svg>
          </div>
          <div className="flex h-[10px] w-[10px] items-center justify-center rounded-[2px] border border-[#b9dcea] bg-[#e8edf0]">
            <svg className="h-[6px] w-[6px]" viewBox="0 0 6 6"><path d="M.5.5l5 5M5.5.5l-5 5" stroke="#000" strokeWidth="1.4" /></svg>
          </div>
        </div>
        <TargetPanel />
      </div>

      <BottomArea />
      <StatusBar />
      <Taskbar />

      <Logo />
      <CopyDialog />
      <svg className="absolute left-[576px] top-[273px] h-[13px] w-[8px]" viewBox="0 0 16 26">
        <path d="M1 1v20l4.5-4 3 7 3-1.5-3-6.5h6z" fill="#fff" stroke="#333" strokeWidth="1.5" />
      </svg>
    </div>
  );
}
